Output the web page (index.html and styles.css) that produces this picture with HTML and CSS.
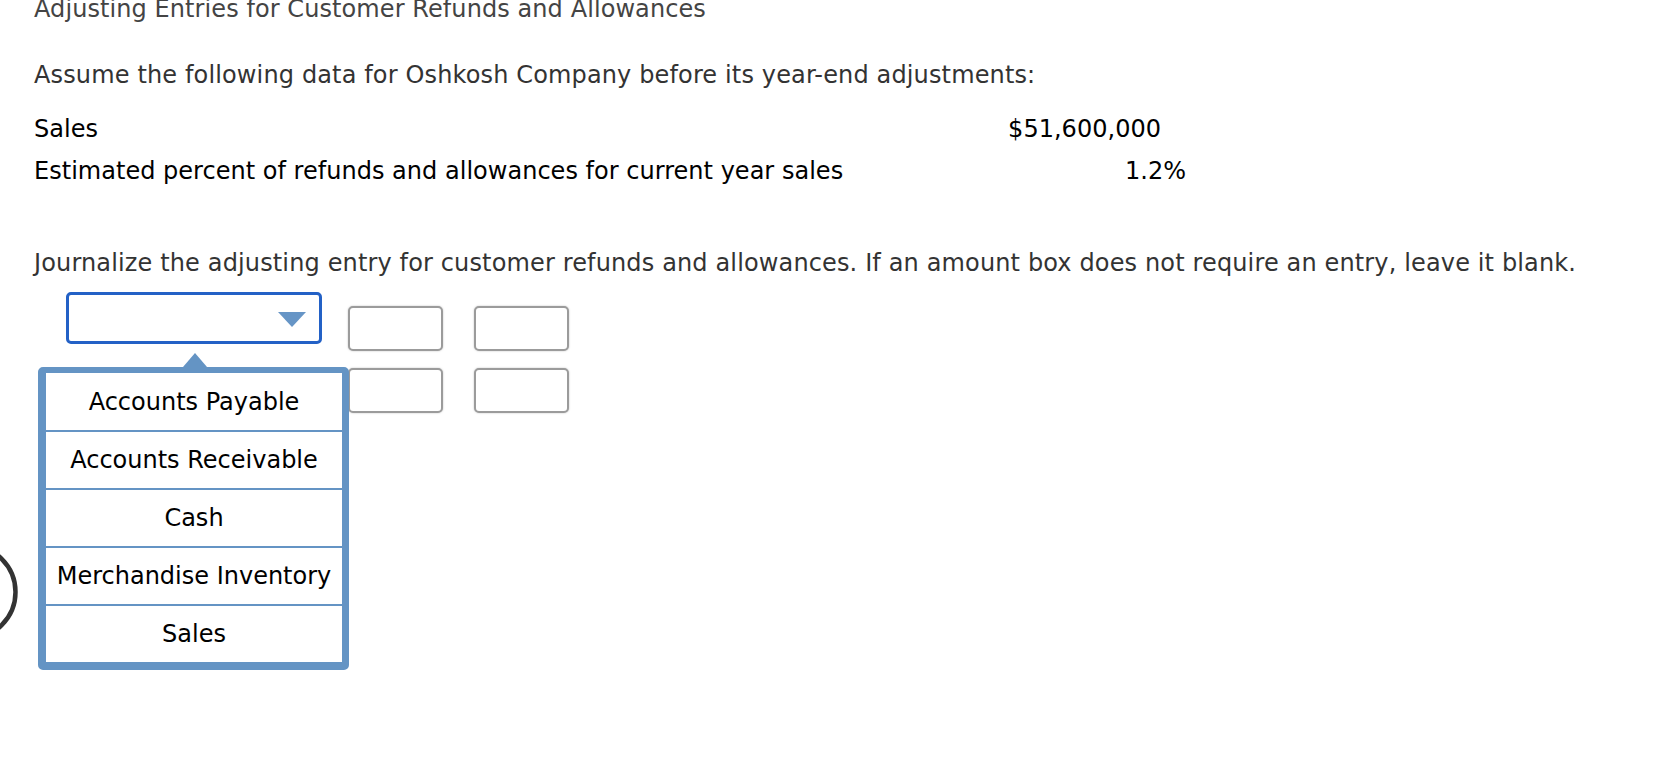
FILE: index.html
```html
<!DOCTYPE html>
<html lang="en">
<head>
<meta charset="utf-8">
<title>Adjusting Entries for Customer Refunds and Allowances</title>
<link rel="stylesheet" href="styles.css">
</head>
<body>
<div class="page">
  <h1 class="title">Adjusting Entries for Customer Refunds and Allowances</h1>
  <p class="intro">Assume the following data for Oshkosh Company before its year-end adjustments:</p>
  <div class="data">
    <div class="data-row">
      <span class="label">Sales</span>
      <span class="value value-amount">$51,600,000</span>
    </div>
    <div class="data-row">
      <span class="label">Estimated percent of refunds and allowances for current year sales</span>
      <span class="value">1.2%</span>
    </div>
  </div>
  <p class="instructions">Journalize the adjusting entry for customer refunds and allowances. If an amount box does not require an entry, leave it blank.</p>

  <div class="entry">
    <div class="entry-row">
      <div class="select"><span class="select-arrow"></span></div>
      <div class="amount amount-debit"></div>
      <div class="amount amount-credit"></div>
    </div>
    <div class="entry-row entry-row-second">
      <div class="select-spacer"></div>
      <div class="amount amount-debit"></div>
      <div class="amount amount-credit"></div>
    </div>

    <ul class="menu">
      <li class="menu-item">Accounts Payable</li>
      <li class="menu-item">Accounts Receivable</li>
      <li class="menu-item">Cash</li>
      <li class="menu-item">Merchandise Inventory</li>
      <li class="menu-item">Sales</li>
    </ul>
  </div>
</div>
<svg class="side-ring" width="20" height="100" viewBox="0 0 20 100" aria-hidden="true">
  <circle cx="-31" cy="50" r="46.5" fill="none" stroke="#333333" stroke-width="4.5"/>
</svg>
</body>
</html>
```
FILE: styles.css
```css
html {
  background: #ffffff;
}

body {
  margin: 0;
  padding: 0;
  min-height: 764px;
  font-family: "DejaVu Sans", Verdana, sans-serif;
  font-size: 24px;
  line-height: 28px;
  letter-spacing: 0.14px;
  color: #333333;
}

.page {
  padding-left: 34px;
}

.title {
  margin: -5px 0 0 0;
  font-size: 24px;
  font-weight: normal;
  line-height: 28px;
  letter-spacing: 0.08px;
  color: #444444;
}

.intro {
  margin: 38px 0 0 0;
  color: #333333;
}

.data {
  margin-top: 19px;
  width: 1152px;
  letter-spacing: 0.02px;
}

.data-row {
  display: flex;
  justify-content: space-between;
  height: 42px;
  line-height: 42px;
  color: #000000;
}

.value-amount {
  margin-right: 25px;
}

.instructions {
  margin: 57px 0 0 0;
  color: #333333;
}

.entry {
  position: relative;
  margin: 15px 0 0 32px;
  width: 520px;
  min-height: 400px;
}

.entry-row {
  display: flex;
  align-items: flex-start;
}

.entry-row-second {
  margin-top: 17px;
}

.select {
  box-sizing: border-box;
  width: 256px;
  height: 52px;
  border: 3px solid #2361c6;
  border-radius: 5px;
  display: flex;
  align-items: center;
  justify-content: flex-end;
  padding-right: 13px;
  background: #ffffff;
}

.select-arrow {
  width: 0;
  height: 0;
  margin-top: 3px;
  border-left: 14px solid transparent;
  border-right: 14px solid transparent;
  border-top: 15px solid #6695c6;
}

.select-spacer {
  width: 256px;
  height: 1px;
}

.amount {
  box-sizing: border-box;
  width: 95px;
  height: 45px;
  border: 2px solid #9b9b9b;
  border-radius: 5px;
  box-shadow: 0 0 2px rgba(0, 0, 0, 0.25);
  background: #ffffff;
}

.entry-row:first-child .amount {
  margin-top: 14px;
}

.amount-debit {
  margin-left: 26px;
}

.amount-credit {
  margin-left: 31px;
}

.menu {
  position: absolute;
  left: -28px;
  top: 75px;
  box-sizing: border-box;
  width: 311px;
  margin: 0;
  padding: 1px 0 0 0;
  list-style: none;
  background: #ffffff;
  border-style: solid;
  border-color: #6494c4;
  border-width: 6px 7px 8px 8px;
  border-radius: 5px;
  color: #000000;
  letter-spacing: 0;
}

.menu::before {
  content: "";
  position: absolute;
  left: 137px;
  top: -20px;
  width: 0;
  height: 0;
  border-left: 12px solid transparent;
  border-right: 12px solid transparent;
  border-bottom: 14px solid #6494c4;
}

.menu-item {
  height: 56px;
  line-height: 57px;
  text-align: center;
  white-space: nowrap;
  border-top: 2px solid #6494c4;
}

.menu-item:first-child {
  border-top: none;
}

.side-ring {
  position: absolute;
  left: 0;
  top: 542px;
}
```
